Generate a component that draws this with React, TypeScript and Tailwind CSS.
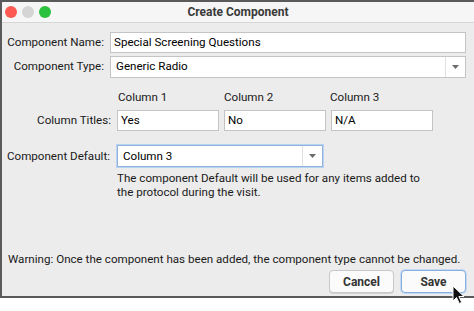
import { useState } from "react";

const font = { fontFamily: "Roboto, 'Liberation Sans', sans-serif" };

function Field({ value, className = "" }: { value: string; className?: string }) {
  return (
    <div
      className={`flex h-[21px] shrink-0 items-center border border-[#c4c4c4] bg-white px-[3px] text-[11.6px] text-black ${className}`}
    >
      {value}
    </div>
  );
}

function Select({ value, className = "", focus = false }: { value: string; className?: string; focus?: boolean }) {
  return (
    <div
      className={`flex h-[22px] shrink-0 items-stretch bg-white text-[11.6px] text-black ${
        focus ? "border border-[#8fb4e0] shadow-[0_0_0_1px_#b9d2f0]" : "border border-[#c4c4c4]"
      } ${className}`}
    >
      <div className="flex flex-1 items-center px-[5px]">{value}</div>
      <div className="flex w-[20px] items-center justify-center border-l border-[#e0e0e0]">
        <svg width="7" height="4" viewBox="0 0 7 4">
          <path d="M0 0h7L3.5 4z" fill="#6b6b6b" />
        </svg>
      </div>
    </div>
  );
}

export default function App() {
  const [cols] = useState(["Yes", "No", "N/A"]);

  return (
    <div className="h-[311px] w-[474px] overflow-hidden whitespace-nowrap bg-white" style={font}>
      <div className="flex h-[298px] flex-col border-b-2 border-l-2 border-t-2 border-[#5a5a5a] bg-[#ececec]">
        {/* title bar */}
        <div className="relative flex h-[21px] shrink-0 items-center border-b border-[#d6d6d6] bg-[#f6f6f6]">
          <div className="flex gap-[5px] pl-[3px]">
            <span className="h-[12px] w-[12px] rounded-full bg-[#fd5a52]" />
            <span className="h-[12px] w-[12px] rounded-full bg-[#d5d5d5]" />
            <span className="h-[12px] w-[12px] rounded-full bg-[#2cc13d]" />
          </div>
          <div className="absolute inset-0 flex items-center justify-center text-[12px] font-bold text-[#3a3a3a]">
            Create Component
          </div>
        </div>

        <div className="flex flex-1 flex-col text-[11.6px] text-[#1a1a1a]">
          <div className="mt-[9px] flex items-center">
            <div className="w-[102px] shrink-0 text-right">Component Name:</div>
            <Field value="Special Screening Questions" className="ml-[6px] w-[356px]" />
          </div>
          <div className="mt-[3px] flex items-center">
            <div className="w-[102px] shrink-0 text-right">Component Type:</div>
            <Select value="Generic Radio" className="ml-[6px] w-[356px]" />
          </div>

          <div className="mt-[11px] flex pl-[115px]">
            {["Column 1", "Column 2", "Column 3"].map((c) => (
              <div key={c} className="w-[106px] pl-[1px]">{c}</div>
            ))}
          </div>
          <div className="mt-[4px] flex items-center">
            <div className="w-[109px] shrink-0 text-right">Column Titles:</div>
            <div className="ml-[6px] flex gap-[5px]">
              {cols.map((c) => (
                <Field key={c} value={c} className="w-[102px]" />
              ))}
            </div>
          </div>

          <div className="mt-[14px] flex items-center">
            <div className="w-[108px] shrink-0 text-right">Component Default:</div>
            <Select value="Column 3" focus className="ml-[7px] w-[206px]" />
          </div>
          <p className="mt-[4px] pl-[115px] leading-[14px]">
            The component Default will be used for any items added to
            <br />
            the protocol during the visit.
          </p>

          <div className="mt-auto px-[6px]">
            Warning: Once the component has been added, the component type cannot be changed.
          </div>
          <div className="mb-[3px] mt-[2px] flex justify-end gap-[7px] pr-[8px]">
            <button className="h-[23px] w-[65px] rounded-[4px] border border-[#c8c8c8] bg-[#fbfbfb] text-[12px] font-bold text-[#333] shadow-[0_1px_0_#d0d0d0]">
              Cancel
            </button>
            <button className="relative h-[23px] w-[65px] rounded-[4px] border border-[#86aee0] bg-[#fbfbfb] text-[12px] font-bold text-[#333] shadow-[0_0_0_1px_#c4d9f2]">
              Save
              <svg className="absolute left-[50px] top-[14px]" width="13" height="20" viewBox="0 0 13 20">
                <path d="M1 1v15l3.5-3.5 2.8 6 2.4-1.1-2.8-5.9H12z" fill="#111" stroke="#fff" strokeWidth="1" />
              </svg>
            </button>
          </div>
        </div>
      </div>
    </div>
  );
}
